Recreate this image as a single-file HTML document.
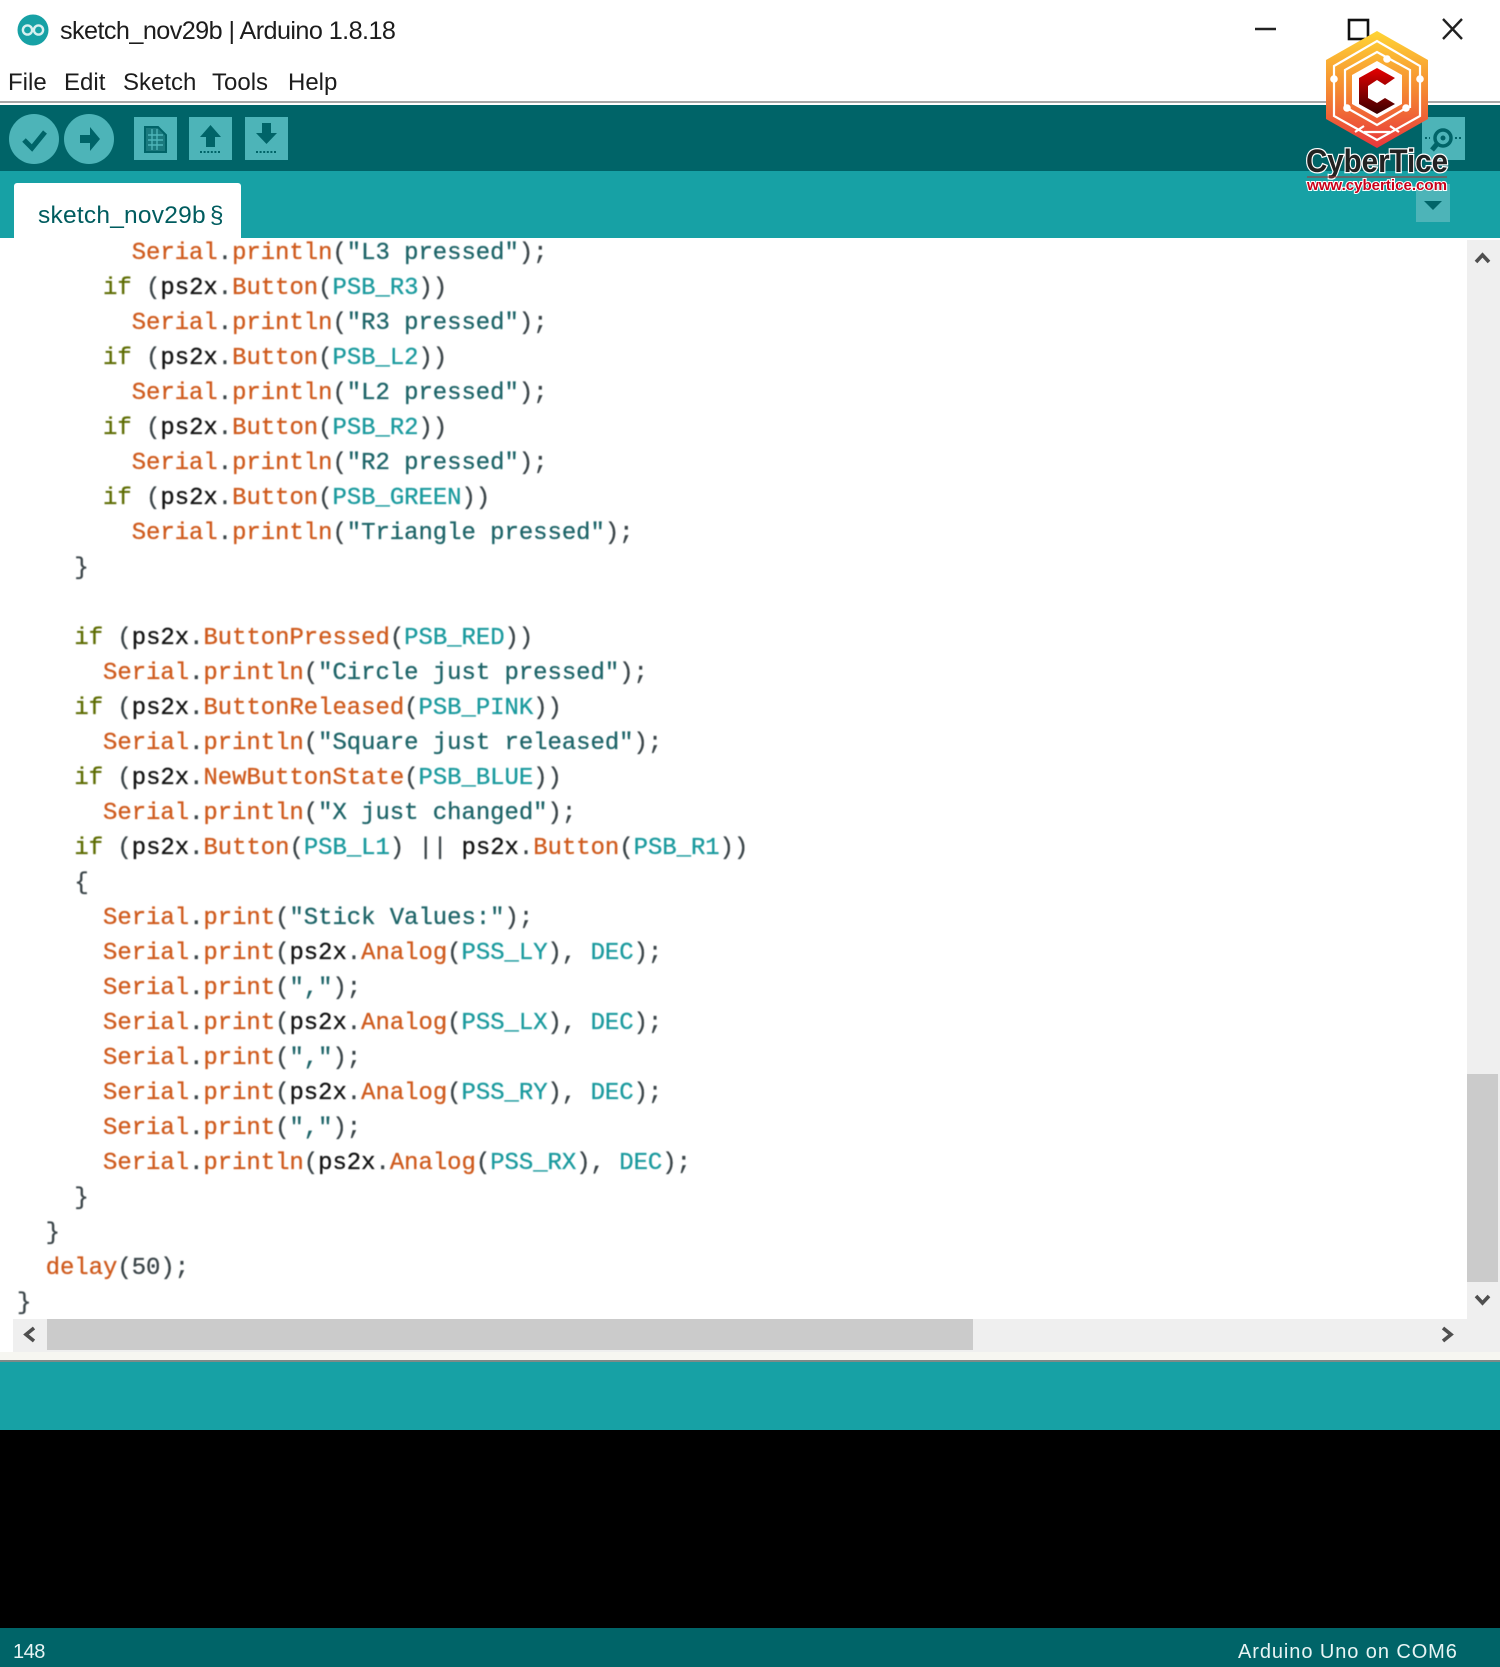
<!DOCTYPE html>
<html><head><meta charset="utf-8"><title>sketch_nov29b | Arduino 1.8.18</title>
<style>
html,body{margin:0;padding:0;background:#fff}
#r{position:relative;width:1500px;height:1667px;overflow:hidden;background:#fff;font-family:"Liberation Sans",sans-serif}
.a{position:absolute}
.t{position:absolute;white-space:pre;color:#1c1c1c}
pre{position:absolute;left:17px;top:236px;margin:0;font:23.9px/35px "Liberation Mono",monospace;color:#3a4448;-webkit-text-stroke:.3px currentColor;filter:blur(.45px)}
i{font-style:normal;color:#cf5a1c}
b{font-weight:normal;color:#5e6d03}
u{text-decoration:none;color:#1a9a9e}
s{text-decoration:none;color:#1d6468}
em{font-style:normal;color:#111}
.btn{position:absolute;background:#4db4b8;width:43px;height:43px}
</style></head><body><div id="r">

<svg class="a" style="left:17px;top:14px" width="32" height="32" viewBox="0 0 32 32"><circle cx="16" cy="16" r="15.500" fill="#17a1a5"/><g fill="none" stroke="#d8f0f0" stroke-width="2.400"><circle cx="10.500" cy="16" r="4.600"/><circle cx="21.500" cy="16" r="4.600"/></g></svg>
<div class="t" style="left:60px;top:16px;font-size:25.200px;line-height:30px;letter-spacing:-.57px;filter:blur(.3px)">sketch_nov29b | Arduino 1.8.18</div>
<div class="t" style="left:8px;top:68px;font-size:24px;line-height:30px;filter:blur(.3px)">File</div>
<div class="t" style="left:64px;top:68px;font-size:24px;line-height:30px;filter:blur(.3px)">Edit</div>
<div class="t" style="left:123px;top:68px;font-size:24px;line-height:30px;filter:blur(.3px)">Sketch</div>
<div class="t" style="left:212px;top:68px;font-size:24px;line-height:30px;filter:blur(.3px)">Tools</div>
<div class="t" style="left:288px;top:68px;font-size:24px;line-height:30px;filter:blur(.3px)">Help</div>

<svg class="a" style="left:1240px;top:10px" width="240" height="40" viewBox="0 0 240 40"><path d="M15 19H36" stroke="#222" stroke-width="2.400"/><rect x="109" y="10" width="19" height="19" fill="none" stroke="#111" stroke-width="2.600"/><path d="M203 9L222 29M222 9L203 29" stroke="#222" stroke-width="2.400"/></svg>

<div class="a" style="left:0;top:101px;width:1500px;height:2px;background:#a8a8a8"></div>
<div class="a" style="left:0;top:105px;width:1500px;height:66px;background:#006468"></div>
<div class="a" style="left:0;top:171px;width:1500px;height:67px;background:#17a1a5"></div>

<svg class="a" style="left:0;top:105px" width="300" height="66" viewBox="0 0 300 66">
<circle cx="34" cy="34" r="25" fill="#4db4b8"/><circle cx="89" cy="34" r="25" fill="#4db4b8"/>
<path d="M24 35L32 43L45 27" fill="none" stroke="#006468" stroke-width="5"/>
<path d="M80 30H90V22L100 34L90 46V38H80Z" fill="#006468"/>
<rect x="134" y="12" width="43" height="43" fill="#4db4b8"/><rect x="189" y="12" width="43" height="43" fill="#4db4b8"/><rect x="245" y="12" width="43" height="43" fill="#4db4b8"/>
<path d="M145 22H158L166 30V47H145Z" fill="#1a7a7e" stroke="#006468" stroke-width="2"/>
<path d="M148 30H163M148 35H163M148 40H163M152 24V45M157 24V45" stroke="#4db4b8" stroke-width="1.400"/>
<path d="M210.500 20L221 32H215V42H206V32H200Z" fill="#006468"/>
<path d="M200 47H221" stroke="#006468" stroke-width="2" stroke-dasharray="2 1.600"/>
<path d="M266.500 39L277 28H271V18H262V28H256Z" fill="#006468"/>
<path d="M256 47H277" stroke="#006468" stroke-width="2" stroke-dasharray="2 1.600"/>
</svg>

<div class="btn" style="left:1422px;top:117px"></div>
<svg class="a" style="left:1422px;top:117px" width="43" height="43" viewBox="0 0 43 43"><circle cx="21" cy="21" r="8" fill="none" stroke="#006468" stroke-width="3.500"/><circle cx="21" cy="21" r="2.500" fill="#006468"/><path d="M15 27L10 33" stroke="#006468" stroke-width="5"/><path d="M33 21H41M3 21H8" stroke="#006468" stroke-width="2" stroke-dasharray="2 2"/></svg>
<div class="a" style="left:1416px;top:184px;width:34px;height:38px;background:#4db4b8"></div>
<svg class="a" style="left:1416px;top:184px" width="34" height="38" viewBox="0 0 34 38"><path d="M8 17H26L17 26Z" fill="#006468"/></svg>

<div class="a" style="left:14px;top:183px;width:227px;height:56px;background:#fff;border-radius:3px 3px 0 0"></div>
<div class="t" style="left:38px;top:201px;font-size:24.500px;line-height:30px;color:#005c5f;letter-spacing:.23px;filter:blur(.3px)">sketch_nov29b <span style="margin-left:-3px">§</span></div>

<pre><i>        Serial</i>.<i>println</i>(<s>"L3 pressed"</s>);
      <b>if</b> (<em>ps2x</em>.<i>Button</i>(<u>PSB_R3</u>))
        <i>Serial</i>.<i>println</i>(<s>"R3 pressed"</s>);
      <b>if</b> (<em>ps2x</em>.<i>Button</i>(<u>PSB_L2</u>))
        <i>Serial</i>.<i>println</i>(<s>"L2 pressed"</s>);
      <b>if</b> (<em>ps2x</em>.<i>Button</i>(<u>PSB_R2</u>))
        <i>Serial</i>.<i>println</i>(<s>"R2 pressed"</s>);
      <b>if</b> (<em>ps2x</em>.<i>Button</i>(<u>PSB_GREEN</u>))
        <i>Serial</i>.<i>println</i>(<s>"Triangle pressed"</s>);
    }

    <b>if</b> (<em>ps2x</em>.<i>ButtonPressed</i>(<u>PSB_RED</u>))
      <i>Serial</i>.<i>println</i>(<s>"Circle just pressed"</s>);
    <b>if</b> (<em>ps2x</em>.<i>ButtonReleased</i>(<u>PSB_PINK</u>))
      <i>Serial</i>.<i>println</i>(<s>"Square just released"</s>);
    <b>if</b> (<em>ps2x</em>.<i>NewButtonState</i>(<u>PSB_BLUE</u>))
      <i>Serial</i>.<i>println</i>(<s>"X just changed"</s>);
    <b>if</b> (<em>ps2x</em>.<i>Button</i>(<u>PSB_L1</u>) || <em>ps2x</em>.<i>Button</i>(<u>PSB_R1</u>))
    {
      <i>Serial</i>.<i>print</i>(<s>"Stick Values:"</s>);
      <i>Serial</i>.<i>print</i>(<em>ps2x</em>.<i>Analog</i>(<u>PSS_LY</u>), <u>DEC</u>);
      <i>Serial</i>.<i>print</i>(<s>","</s>);
      <i>Serial</i>.<i>print</i>(<em>ps2x</em>.<i>Analog</i>(<u>PSS_LX</u>), <u>DEC</u>);
      <i>Serial</i>.<i>print</i>(<s>","</s>);
      <i>Serial</i>.<i>print</i>(<em>ps2x</em>.<i>Analog</i>(<u>PSS_RY</u>), <u>DEC</u>);
      <i>Serial</i>.<i>print</i>(<s>","</s>);
      <i>Serial</i>.<i>println</i>(<em>ps2x</em>.<i>Analog</i>(<u>PSS_RX</u>), <u>DEC</u>);
    }
  }
  <i>delay</i>(50);
}</pre>

<div class="a" style="left:1467px;top:240px;width:33px;height:1112px;background:#efefef"></div>
<div class="a" style="left:1467px;top:1074px;width:31px;height:208px;background:#cbcbcb"></div>
<div class="a" style="left:13px;top:1319px;width:1487px;height:33px;background:#efefef"></div>
<div class="a" style="left:47px;top:1319px;width:926px;height:31px;background:#cbcbcb"></div>
<svg class="a" style="left:0;top:240px" width="1500" height="1120" viewBox="0 0 1500 1120" fill="none" stroke="#4f4f4f" stroke-width="3.600"><path d="M1476 22L1482.500 15L1489 22"/><path d="M1476 1056L1482.500 1063L1489 1056"/><path d="M34 1088L26 1094.500L34 1101"/><path d="M1443 1088L1451 1094.500L1443 1101"/></svg>
<div class="a" style="left:0;top:1352px;width:1500px;height:8px;background:#f6f6f1"></div>
<div class="a" style="left:0;top:1360px;width:1500px;height:2px;background:#7e8a88"></div>
<div class="a" style="left:0;top:1362px;width:1500px;height:68px;background:#17a1a5"></div>
<div class="a" style="left:0;top:1430px;width:1500px;height:198px;background:#000"></div>
<div class="a" style="left:0;top:1628px;width:1500px;height:39px;background:#006468"></div>
<div class="t" style="left:13px;top:1640px;font-size:20px;line-height:24px;color:#e8f4f4;letter-spacing:-.5px;filter:blur(.3px)">148</div>
<div class="t" style="left:1238px;top:1640px;font-size:20px;line-height:24px;color:#e8f4f4;letter-spacing:.92px;filter:blur(.3px)">Arduino Uno on COM6</div>

<svg class="a" style="left:1300px;top:28px" width="155" height="170" viewBox="0 0 155 170">
<defs><linearGradient id="g" x1="0" y1="0" x2="0" y2="1"><stop offset="0" stop-color="#ffd534"/><stop offset=".5" stop-color="#f58a32"/><stop offset="1" stop-color="#e8363c"/></linearGradient><linearGradient id="c" x1="0" y1="0" x2="0" y2="1"><stop offset="0" stop-color="#e60000"/><stop offset="1" stop-color="#3a0000"/></linearGradient></defs>
<path d="M77 3L128 32V91L77 120L26 91V32Z" fill="url(#g)"/>
<g fill="none" stroke="#fff" stroke-width="2.200"><path d="M34 51V38L77 13L120 38V51"/><path d="M34 51V88L77 112L120 88V51"/><path d="M45 80V42L77 24L110 42V80"/><path d="M47 80L77 97L106 80"/><path d="M64 98L55 104M90 98L99 104M64 104H90"/></g>
<path d="M77 33L102 47V76L77 90L52 76V47Z" fill="#fff"/>
<path d="M77 40L95 50L85 57L77 52L68 58V70L77 75L85 70L95 76L77 86L59 76V50Z" fill="url(#c)"/>
<g fill="#fff"><circle cx="34" cy="51" r="3.800"/><circle cx="120" cy="51" r="3.800"/><circle cx="87" cy="31" r="3.800"/><circle cx="47" cy="80" r="3.800"/><circle cx="106" cy="80" r="3.800"/></g>
<text x="77" y="144" text-anchor="middle" font-family="'Liberation Sans',sans-serif" font-weight="bold" font-size="32" textLength="142" lengthAdjust="spacingAndGlyphs" fill="#222" stroke="#fff" stroke-width="2.500" paint-order="stroke">CyberTice</text>
<path d="M7 149H147" stroke="#a33" stroke-width="1"/>
<text x="77" y="162" text-anchor="middle" font-family="'Liberation Sans',sans-serif" font-weight="bold" font-size="14.500" textLength="140" lengthAdjust="spacingAndGlyphs" fill="#c8001a" stroke="#fff" stroke-width="2" paint-order="stroke">www.cybertice.com</text>
</svg>
</div></body></html>
